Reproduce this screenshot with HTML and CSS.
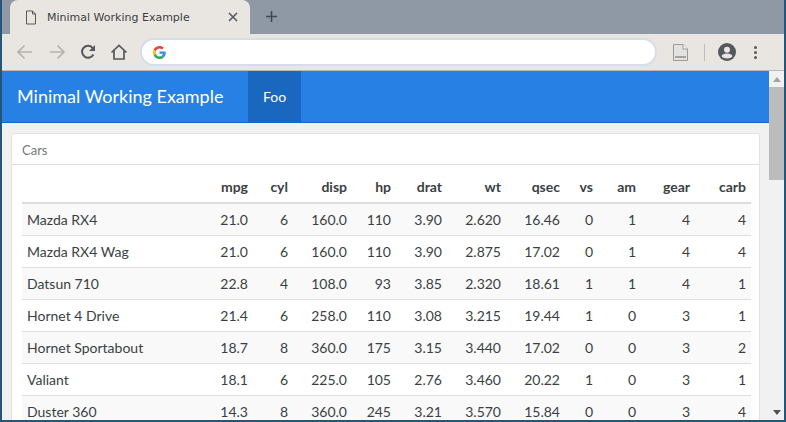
FILE: index.html
```html
<!DOCTYPE html>
<html>
    <head>
        <meta charset="UTF-8">
        <title>Minimal Working Example</title>
        <link rel="stylesheet" href="styles.css">
    </head>
    <body>
        <div class="window">
            <div class="tabstrip">
                <div class="tab">
                    <svg class="tab-icon" width="12" height="15" viewBox="0 0 12 15"><path d="M1.5 1H7.5L10.5 4V14H1.5Z M7.5 1V4H10.5" fill="none" stroke="#55585c" stroke-width="1"/></svg>
                    <span class="tab-title">Minimal Working Example</span>
                    <svg class="tab-close" width="10" height="10" viewBox="0 0 10 10"><path d="M1 1L9 9M9 1L1 9" stroke="#55585c" stroke-width="1.6"/></svg>
                </div>
                <svg class="newtab" width="13" height="13" viewBox="0 0 13 13"><path d="M6.5 1V12M1 6.5H12" stroke="#45494e" stroke-width="1.6"/></svg>
            </div>
            <div class="toolbar">
                <svg class="tool" width="18" height="16" viewBox="0 0 18 16"><path d="M16 8H2.5M8.5 1.5L2 8L8.5 14.5" fill="none" stroke="#b3b2ae" stroke-width="1.7"/></svg>
                <svg class="tool" width="18" height="16" viewBox="0 0 18 16"><path d="M2 8H15.5M9.5 1.5L16 8L9.5 14.5" fill="none" stroke="#b3b2ae" stroke-width="1.7"/></svg>
                <svg class="tool" width="16" height="16" viewBox="0 0 16 16"><path d="M13.4 10.5A6 6 0 1 1 12.6 3.8" fill="none" stroke="#55585c" stroke-width="2"/><path d="M15 1V7H9Z" fill="#55585c"/></svg>
                <svg class="tool" width="18" height="16" viewBox="0 0 18 16"><path d="M1.5 8.5L9 1.5L16.5 8.5M4 6.5V15H14V6.5" fill="none" stroke="#55585c" stroke-width="1.7"/></svg>
                <div class="omnibox">
                    <svg width="13" height="13" viewBox="0 0 48 48"><path fill="#EA4335" d="M24 9.5c3.5 0 6.700 1.200 9.200 3.600l6.900-6.900C35.900 2.400 30.500 0 24 0 14.600 0 6.500 5.400 2.600 13.200l8 6.200C12.500 13.600 17.800 9.500 24 9.500z"/><path fill="#4285F4" d="M47 24.500c0-1.600-.1-3.100-.4-4.500H24v9h12.900c-.6 3-2.200 5.500-4.700 7.200l7.700 6C44.400 38 47 31.800 47 24.500z"/><path fill="#FBBC05" d="M10.500 28.600A14.500 14.500 0 0 1 10.500 19.400l-8-6.200A24 24 0 0 0 2.600 34.800z"/><path fill="#34A853" d="M24 48c6.500 0 11.900-2.100 15.900-5.800l-7.700-6c-2.200 1.500-5 2.300-8.200 2.300-6.200 0-11.500-4.200-13.400-9.900l-8 6.200C6.500 42.600 14.600 48 24 48z"/></svg>
                </div>
                <svg class="doc" width="15" height="17" viewBox="0 0 15 17"><path d="M.5.5H10L14.500 5V16.500H.5Z" fill="#e2e2e0" stroke="#9b9b99"/><path d="M10 .5V5H14.500" fill="#f5f5f3" stroke="#9b9b99"/><rect x="2" y="12" width="11" height="2" fill="#a3a3a1"/></svg>
                <div class="divider"></div>
                <svg class="account" width="18" height="18" viewBox="0 0 18 18"><circle cx="9" cy="9" r="9" fill="#55585c"/><circle cx="9" cy="6.800" r="3" fill="#e9e6e2"/><ellipse cx="9" cy="13" rx="5.300" ry="2.600" fill="#e9e6e2"/></svg>
                <div class="menu"><span></span><span></span><span></span></div>
            </div>
            <div class="viewport">
                <div class="page">
                    <div class="navbar">
                        <div class="brand">Minimal Working Example</div>
                        <div class="navitem">Foo</div>
                    </div>
                    <div class="content">
                        <div class="card">
                            <div class="card-title">Cars</div>
                            <div class="card-body">
                                <table>
                                    <colgroup>
                                        <col class="c-name"><col class="c-mpg"><col class="c-cyl"><col class="c-disp"><col class="c-hp"><col class="c-drat"><col class="c-wt"><col class="c-qsec"><col class="c-vs"><col class="c-am"><col class="c-gear"><col class="c-carb">
                                    </colgroup>
                                    <thead>
                                        <tr><th></th><th>mpg</th><th>cyl</th><th>disp</th><th>hp</th><th>drat</th><th>wt</th><th>qsec</th><th>vs</th><th>am</th><th>gear</th><th>carb</th></tr>
                                    </thead>
                                    <tbody>
                                        <tr><td>Mazda RX4</td><td>21.0</td><td>6</td><td>160.0</td><td>110</td><td>3.90</td><td>2.620</td><td>16.46</td><td>0</td><td>1</td><td>4</td><td>4</td></tr>
                                        <tr><td>Mazda RX4 Wag</td><td>21.0</td><td>6</td><td>160.0</td><td>110</td><td>3.90</td><td>2.875</td><td>17.02</td><td>0</td><td>1</td><td>4</td><td>4</td></tr>
                                        <tr><td>Datsun 710</td><td>22.8</td><td>4</td><td>108.0</td><td>93</td><td>3.85</td><td>2.320</td><td>18.61</td><td>1</td><td>1</td><td>4</td><td>1</td></tr>
                                        <tr><td>Hornet 4 Drive</td><td>21.4</td><td>6</td><td>258.0</td><td>110</td><td>3.08</td><td>3.215</td><td>19.44</td><td>1</td><td>0</td><td>3</td><td>1</td></tr>
                                        <tr><td>Hornet Sportabout</td><td>18.7</td><td>8</td><td>360.0</td><td>175</td><td>3.15</td><td>3.440</td><td>17.02</td><td>0</td><td>0</td><td>3</td><td>2</td></tr>
                                        <tr><td>Valiant</td><td>18.1</td><td>6</td><td>225.0</td><td>105</td><td>2.76</td><td>3.460</td><td>20.22</td><td>1</td><td>0</td><td>3</td><td>1</td></tr>
                                        <tr><td>Duster 360</td><td>14.3</td><td>8</td><td>360.0</td><td>245</td><td>3.21</td><td>3.570</td><td>15.84</td><td>0</td><td>0</td><td>3</td><td>4</td></tr>
                                    </tbody>
                                </table>
                            </div>
                        </div>
                    </div>
                </div>
                <div class="scrollbar">
                    <div class="arrow-up"></div>
                    <div class="thumb"></div>
                    <div class="track"></div>
                    <div class="arrow-down"></div>
                </div>
            </div>
        </div>
    </body>
</html>
```

FILE: styles.css
```css
html, body {
    margin: 0;
    height: 100%;
    overflow: hidden;
}

.window {
    width: 786px;
    height: 422px;
    box-sizing: border-box;
    border-left: 2px solid #26557a;
    border-right: 2px solid #26557a;
    border-bottom: 2px solid #26557a;
    display: flex;
    flex-direction: column;
    overflow: hidden;
}

.tabstrip {
    height: 34px;
    flex: none;
    background: #8e99a5;
    display: flex;
    align-items: flex-start;
}

.tab {
    width: 240px;
    height: 34px;
    margin-left: 8px;
    box-sizing: border-box;
    padding: 0 8px 0 15px;
    background: #e9e6e2;
    border-radius: 8px 8px 0 0;
    display: flex;
    align-items: center;
}

.tab-title {
    margin-left: 10px;
    font-family: "DejaVu Sans", sans-serif;
    font-size: 11px;
    color: #3c4043;
    flex: 1;
    white-space: nowrap;
}

.tab-close {
    margin-right: 4px;
}

.newtab {
    margin: 10px 0 0 15px;
}

.toolbar {
    height: 37px;
    flex: none;
    background: #e9e6e2;
    display: flex;
    align-items: center;
    padding-left: 14px;
    box-sizing: border-box;
    border-bottom: 1px solid #b9b9b7;
}

.tool {
    margin-right: 14px;
}

.omnibox {
    width: 517px;
    height: 28px;
    margin-left: -2px;
    box-sizing: border-box;
    padding-left: 11px;
    background: #fff;
    border: 2px solid #d5dde6;
    border-radius: 14px;
    display: flex;
    align-items: center;
}

.doc {
    margin-left: 16px;
}

.divider {
    width: 1px;
    height: 17px;
    background: #bcbcba;
    margin-left: 16px;
}

.account {
    margin-left: 13px;
}

.menu {
    margin-left: 18px;
    display: flex;
    flex-direction: column;
    gap: 2px;
}

.menu span {
    width: 3px;
    height: 3px;
    border-radius: 50%;
    background: #55585c;
}

.viewport {
    flex: 1;
    display: flex;
    min-height: 0;
}

.page {
    flex: 1;
    background: #f1f1f1;
    overflow: hidden;
    font-family: Lato, sans-serif;
    font-size: 14px;
    color: #3a3f44;
}

.navbar {
    height: 52px;
    box-sizing: border-box;
    background: #2780e3;
    border-bottom: 1px solid #1967be;
    display: flex;
    color: #fff;
}

.brand {
    font-size: 18px;
    line-height: 51px;
    padding: 0 25px 0 15px;
    width: 246px;
    box-sizing: border-box;
    white-space: nowrap;
}

.navitem {
    width: 53px;
    text-align: center;
    line-height: 51px;
    background: #1967be;
}

.content {
    padding: 10px 9px 0 9px;
}

.card {
    background: #fff;
    border: 1px solid #e2e2e2;
    border-radius: 3px;
}

.card-title {
    height: 30px;
    line-height: 33px;
    padding-left: 10px;
    font-size: 13px;
    color: #767676;
    border-bottom: 1px solid #ddd;
}

.card-body {
    padding: 6px 10px 0 10px;
}

table {
    width: 729px;
    table-layout: fixed;
    border-collapse: collapse;
}

.c-name { width: 186px; }
.c-mpg { width: 45px; }
.c-cyl { width: 40px; }
.c-disp { width: 59px; }
.c-hp { width: 44px; }
.c-drat { width: 51px; }
.c-wt { width: 59px; }
.c-qsec { width: 59px; }
.c-vs { width: 33px; }
.c-am { width: 43px; }
.c-gear { width: 54px; }
.c-carb { width: 56px; }

th, td {
    padding: 0 5px;
    text-align: right;
    white-space: nowrap;
}

th {
    height: 31px;
    font-weight: 700;
    border-bottom: 2px solid #ddd;
}

td {
    height: 31px;
    border-bottom: 1px solid #ddd;
}

td:first-child {
    text-align: left;
}

tbody tr:nth-child(odd) {
    background: #f9f9f9;
}

.scrollbar {
    width: 15px;
    flex: none;
    background: #f1f1f1;
    display: flex;
    flex-direction: column;
    align-items: center;
}

.arrow-up {
    margin: 6px 0 5px;
    width: 0;
    height: 0;
    border-left: 4px solid transparent;
    border-right: 4px solid transparent;
    border-bottom: 5px solid #a3a3a3;
}

.thumb {
    width: 100%;
    height: 93px;
    background: #bcbcbc;
}

.track {
    flex: 1;
}

.arrow-down {
    margin: 0 0 5px;
    width: 0;
    height: 0;
    border-left: 4px solid transparent;
    border-right: 4px solid transparent;
    border-top: 5px solid #505050;
}
```
